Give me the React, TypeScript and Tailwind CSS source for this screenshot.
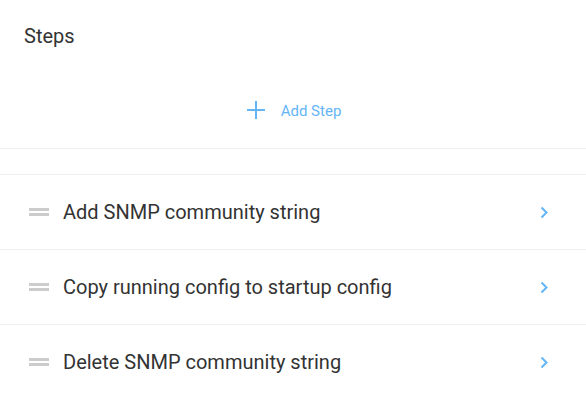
import React from 'react';

const STEPS = [
  'Add SNMP community string',
  'Copy running config to startup config',
  'Delete SNMP community string',
];

function DragHandle() {
  return (
    <div className="flex flex-col gap-[2px] w-5 shrink-0">
      <div className="h-[3px] bg-[#cccccc]" />
      <div className="h-[3px] bg-[#cccccc]" />
    </div>
  );
}

export default function App() {
  return (
    <div className="w-[586px] h-[397px] overflow-hidden bg-white text-[#333333]" style={{ fontFamily: 'Roboto, "Liberation Sans", sans-serif' }}>
      {/* Header */}
      <div className="h-[72px] flex items-center px-6">
        <h2 className="text-[20px] font-normal">Steps</h2>
      </div>

      {/* Add step */}
      <div className="h-[77px] flex items-center justify-center border-b border-[#eeeeee] pl-[2px]">
        <button className="flex items-center gap-4 text-[#64b5f6] pt-[2px]">
          <svg width="18" height="18" viewBox="0 0 18 18" className="shrink-0 -mt-[2px]">
            <path d="M9 0v18M0 9h18" stroke="#64b5f6" strokeWidth="2" />
          </svg>
          <span className="text-[15px]">Add Step</span>
        </button>
      </div>

      {/* Step list */}
      <div className="mt-[25px] border-t border-[#eeeeee]">
        {STEPS.map(step => (
          <div key={step} className="h-[75px] flex items-center pl-[29px] pr-[38px] border-b border-[#eeeeee]">
            <DragHandle />
            <span className="ml-[14px] text-[20px] flex-1 -mt-[1px]">{step}</span>
            <svg width="8" height="13" viewBox="0 0 8 13" className="shrink-0">
              <path d="M1.5 1.5l5 5-5 5" fill="none" stroke="#64b5f6" strokeWidth="2" />
            </svg>
          </div>
        ))}
      </div>
    </div>
  );
}
